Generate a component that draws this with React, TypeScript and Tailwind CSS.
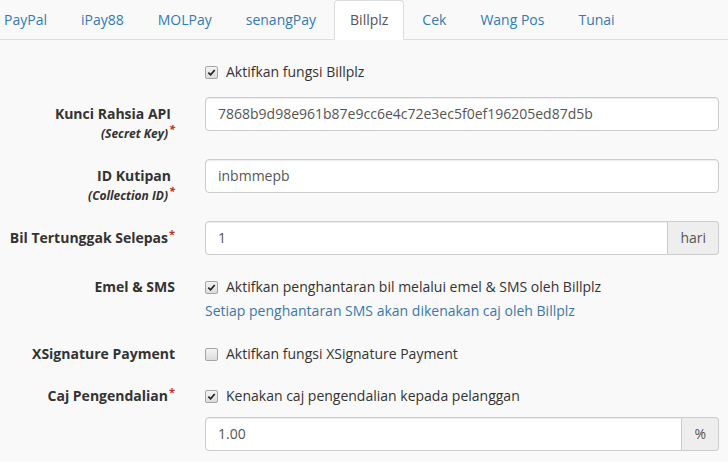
import type { ReactNode } from "react";

const tabs = ["PayPal", "iPay88", "MOLPay", "senangPay", "Billplz", "Cek", "Wang Pos", "Tunai"];

function Req() {
  return <span className="relative top-[-5px] ml-px text-[11px] font-bold text-[#b8312f]">*</span>;
}

function Check({ checked }: { checked: boolean }) {
  return (
    <span className="flex h-[13px] w-[13px] shrink-0 items-center justify-center rounded-[2px] border border-[#a5a5a5] bg-gradient-to-b from-[#f4f4f4] to-[#dcdcdc]">
      {checked && (
        <svg viewBox="0 0 10 10" className="h-[9px] w-[9px]">
          <path d="M1.5 5.2 L4 7.6 L8.6 2.2" fill="none" stroke="#222" strokeWidth="1.9" />
        </svg>
      )}
    </span>
  );
}

function CheckLine({ checked, children }: { checked: boolean; children: ReactNode }) {
  return (
    <div className="flex h-5 items-center gap-[8px] text-[#333]">
      <Check checked={checked} />
      <span>{children}</span>
    </div>
  );
}

function Label({ children, className = "" }: { children: ReactNode; className?: string }) {
  return <div className={`w-[190px] shrink-0 pr-[15px] text-right font-bold text-[#333] ${className}`}>{children}</div>;
}

function TextInput({ value, addon }: { value: string; addon?: string }) {
  return (
    <div className="flex h-[34px]">
      <div
        className={`flex flex-1 items-center border border-[#ccc] bg-white px-[12px] text-[#555] shadow-[inset_0_1px_1px_rgba(0,0,0,0.075)] ${
          addon ? "rounded-l-[4px]" : "rounded-[4px]"
        }`}
      >
        {value}
      </div>
      {addon && (
        <div className="flex items-center rounded-r-[4px] border border-l-0 border-[#ccc] bg-[#eee] px-[12px] text-[#555]">
          {addon}
        </div>
      )}
    </div>
  );
}

export default function App() {
  return (
    <div className="h-[462px] w-[728px] overflow-hidden bg-[#f9f9f9] font-['Open_Sans',sans-serif] text-[14px] leading-5">
      <ul className="flex h-[40px] border-b border-[#ddd]">
        <div className="ml-[-12px] flex">
          {tabs.map((t) => {
            const active = t === "Billplz";
            return (
              <li
                key={t}
                className={`mr-[2px] -mb-px h-[40px] rounded-t-[4px] border px-[15px] pt-[9px] ${
                  active
                    ? "border-[#ddd] border-b-transparent bg-white text-[#555]"
                    : "border-transparent text-[#337ab7]"
                }`}
              >
                {t}
              </li>
            );
          })}
        </div>
      </ul>

      <div className="pr-[9px]">
        <div className="mt-[22px] flex">
          <Label />
          <div className="flex-1 pl-[15px]">
            <CheckLine checked>Aktifkan fungsi Billplz</CheckLine>
          </div>
        </div>

        <div className="mt-[15px] flex h-[47px]">
          <Label className="pt-[7px]">
            <div className="pr-[4px]">Kunci Rahsia API</div>
            <div className="text-[12px] italic">
              (Secret Key)
              <Req />
            </div>
          </Label>
          <div className="flex-1 pl-[15px]">
            <TextInput value="7868b9d98e961b87e9cc6e4c72e3ec5f0ef196205ed87d5b" />
          </div>
        </div>

        <div className="mt-[15px] flex h-[47px]">
          <Label className="pt-[7px]">
            <div className="pr-[4px]">ID Kutipan</div>
            <div className="text-[12px] italic">
              (Collection ID)
              <Req />
            </div>
          </Label>
          <div className="flex-1 pl-[15px]">
            <TextInput value="inbmmepb" />
          </div>
        </div>

        <div className="mt-[15px] flex">
          <Label className="pt-[7px]">
            Bil Tertunggak Selepas
            <Req />
          </Label>
          <div className="flex-1 pl-[15px]">
            <TextInput value="1" addon="hari" />
          </div>
        </div>

        <div className="mt-[22px] flex">
          <Label>Emel &amp; SMS</Label>
          <div className="flex-1 pl-[15px]">
            <CheckLine checked>Aktifkan penghantaran bil melalui emel &amp; SMS oleh Billplz</CheckLine>
            <p className="mt-[4px] text-[#3b77ab]">Setiap penghantaran SMS akan dikenakan caj oleh Billplz</p>
          </div>
        </div>

        <div className="mt-[23px] flex">
          <Label>XSignature Payment</Label>
          <div className="flex-1 pl-[15px]">
            <CheckLine checked={false}>Aktifkan fungsi XSignature Payment</CheckLine>
          </div>
        </div>

        <div className="mt-[22px] flex">
          <Label>
            Caj Pengendalian
            <Req />
          </Label>
          <div className="flex-1 pl-[15px]">
            <CheckLine checked>Kenakan caj pengendalian kepada pelanggan</CheckLine>
            <div className="mt-[11px]">
              <TextInput value="1.00" addon="%" />
            </div>
          </div>
        </div>
      </div>
    </div>
  );
}
